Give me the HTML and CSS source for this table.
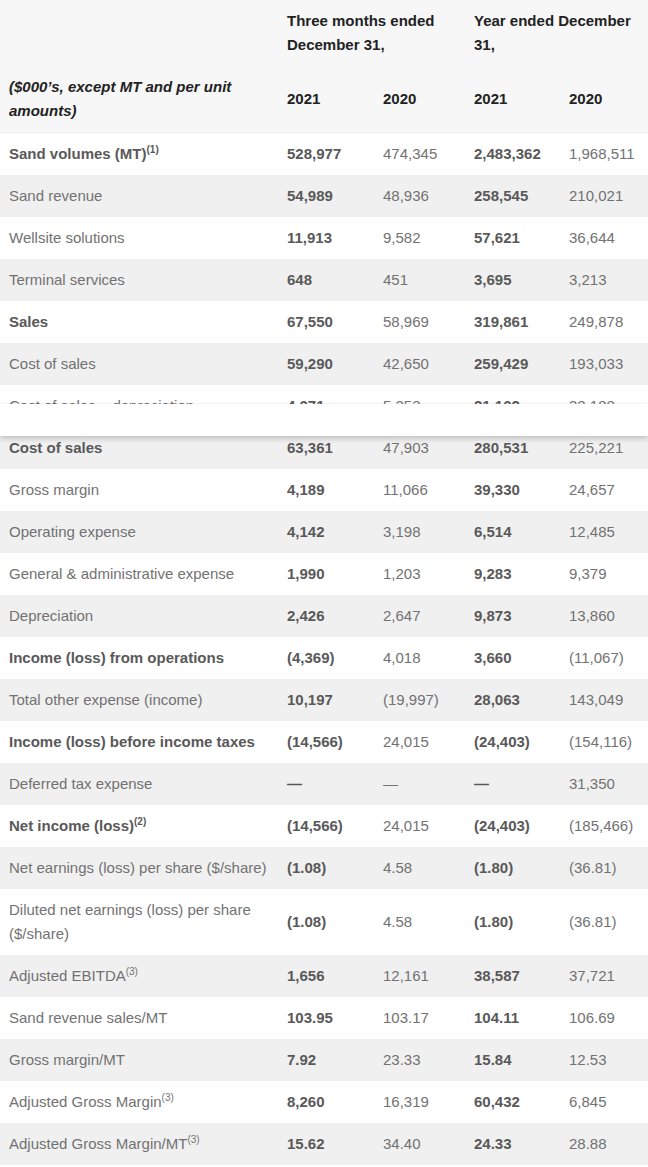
FILE: index.html
```html
<!DOCTYPE html>
<html>
<head>
<meta charset="utf-8">
<link rel="stylesheet" href="styles.css">
</head>
<body>
<div class="wrap">
<table class="fin">
<colgroup>
<col class="c-label"><col class="c-a"><col class="c-b"><col class="c-c"><col class="c-d">
</colgroup>
<thead>
<tr class="h1"><th></th><th colspan="2">Three months ended December 31,</th><th colspan="2">Year ended December 31,</th></tr>
<tr class="h2"><th class="unit">($000’s, except MT and per unit amounts)</th><th>2021</th><th>2020</th><th>2021</th><th>2020</th></tr>
</thead>
<tbody>
<tr class="strong"><td>Sand volumes (MT)<sup>(1)</sup></td><td>528,977</td><td>474,345</td><td>2,483,362</td><td>1,968,511</td></tr>
<tr><td>Sand revenue</td><td>54,989</td><td>48,936</td><td>258,545</td><td>210,021</td></tr>
<tr><td>Wellsite solutions</td><td>11,913</td><td>9,582</td><td>57,621</td><td>36,644</td></tr>
<tr><td>Terminal services</td><td>648</td><td>451</td><td>3,695</td><td>3,213</td></tr>
<tr class="strong"><td>Sales</td><td>67,550</td><td>58,969</td><td>319,861</td><td>249,878</td></tr>
<tr><td>Cost of sales</td><td>59,290</td><td>42,650</td><td>259,429</td><td>193,033</td></tr>
<tr><td>Cost of sales – depreciation</td><td>4,071</td><td>5,253</td><td>21,102</td><td>32,188</td></tr>
<tr class="strong"><td>Cost of sales</td><td>63,361</td><td>47,903</td><td>280,531</td><td>225,221</td></tr>
<tr><td>Gross margin</td><td>4,189</td><td>11,066</td><td>39,330</td><td>24,657</td></tr>
<tr><td>Operating expense</td><td>4,142</td><td>3,198</td><td>6,514</td><td>12,485</td></tr>
<tr><td>General &amp; administrative expense</td><td>1,990</td><td>1,203</td><td>9,283</td><td>9,379</td></tr>
<tr><td>Depreciation</td><td>2,426</td><td>2,647</td><td>9,873</td><td>13,860</td></tr>
<tr class="strong"><td>Income (loss) from operations</td><td>(4,369)</td><td>4,018</td><td>3,660</td><td>(11,067)</td></tr>
<tr><td>Total other expense (income)</td><td>10,197</td><td>(19,997)</td><td>28,063</td><td>143,049</td></tr>
<tr class="strong"><td>Income (loss) before income taxes</td><td>(14,566)</td><td>24,015</td><td>(24,403)</td><td>(154,116)</td></tr>
<tr><td>Deferred tax expense</td><td>—</td><td>—</td><td>—</td><td>31,350</td></tr>
<tr class="strong"><td>Net income (loss)<sup>(2)</sup></td><td>(14,566)</td><td>24,015</td><td>(24,403)</td><td>(185,466)</td></tr>
<tr><td>Net earnings (loss) per share ($/share)</td><td>(1.08)</td><td>4.58</td><td>(1.80)</td><td>(36.81)</td></tr>
<tr><td>Diluted net earnings (loss) per share ($/share)</td><td>(1.08)</td><td>4.58</td><td>(1.80)</td><td>(36.81)</td></tr>
<tr><td>Adjusted EBITDA<sup>(3)</sup></td><td>1,656</td><td>12,161</td><td>38,587</td><td>37,721</td></tr>
<tr><td>Sand revenue sales/MT</td><td>103.95</td><td>103.17</td><td>104.11</td><td>106.69</td></tr>
<tr><td>Gross margin/MT</td><td>7.92</td><td>23.33</td><td>15.84</td><td>12.53</td></tr>
<tr><td>Adjusted Gross Margin<sup>(3)</sup></td><td>8,260</td><td>16,319</td><td>60,432</td><td>6,845</td></tr>
<tr><td>Adjusted Gross Margin/MT<sup>(3)</sup></td><td>15.62</td><td>34.40</td><td>24.33</td><td>28.88</td></tr>
</tbody>
</table>
<div class="sticky-bar"></div>
</div>
</body>
</html>
```
FILE: styles.css
```css
html, body {
  margin: 0;
  padding: 0;
  background: #fff;
}
body {
  font-family: "Liberation Sans Narrow", "Liberation Sans", "Roboto", sans-serif;
  font-size: 15px;
  color: #666;
}
.wrap {
  position: relative;
  width: 648px;
}
.fin {
  width: 648px;
  border-collapse: collapse;
  table-layout: fixed;
}
.c-label { width: 278px; }
.c-a { width: 96px; }
.c-b { width: 91px; }
.c-c { width: 95px; }
.c-d { width: 88px; }

.fin th, .fin td {
  padding: 9px 9px;
  line-height: 24px;
  text-align: left;
  vertical-align: middle;
}
.fin thead tr {
  background: #f7f7f7;
}
.fin thead th {
  font-weight: bold;
  color: #222;
  font-size: 15px;
}
.fin .h1 th {
  vertical-align: top;
}
.fin .h2 th {
  border-bottom: 1px solid #ececec;
}
.fin .h2 th.unit {
  font-style: italic;
}
.fin tbody tr:nth-child(even) {
  background: #f0f0f0;
}
.fin tbody td {
  color: #727272;
}
.fin tbody td:nth-child(2),
.fin tbody td:nth-child(4) {
  font-weight: bold;
  color: #595959;
}
.fin tbody tr.strong td:first-child {
  font-weight: bold;
  color: #595959;
}
.fin sup {
  font-size: 10px;
  line-height: 0;
  vertical-align: 6px;
}
.sticky-bar {
  position: absolute;
  left: 0;
  top: 404px;
  width: 648px;
  height: 32px;
  background: #fff;
  box-shadow: 0 3px 5px rgba(0, 0, 0, 0.18), 0 -1px 2px rgba(0, 0, 0, 0.04);
}
```
